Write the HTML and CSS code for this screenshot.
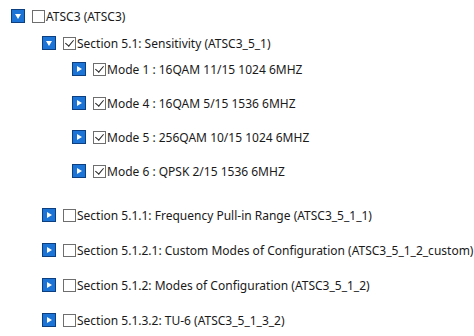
FILE: index.html
```html
<!DOCTYPE html>
<html lang="en">
<head>
    <meta charset="UTF-8">
    <title>Test tree</title>
    <link rel="stylesheet" href="styles.css">
</head>
<body>
    <ul class="tree">
        <li>
            <div class="row">
                <span class="toggle open"></span>
                <span class="check"></span>
                <span class="label">ATSC3 (ATSC3)</span>
            </div>
            <ul class="tree sections">
                <li>
                    <div class="row">
                        <span class="toggle open"></span>
                        <span class="check checked"></span>
                        <span class="label">Section 5.1: Sensitivity (ATSC3_5_1)</span>
                    </div>
                    <ul class="tree modes">
                        <li class="row">
                            <span class="toggle"></span>
                            <span class="check checked"></span>
                            <span class="label">Mode 1 : 16QAM 11/15 1024 6MHZ</span>
                        </li>
                        <li class="row">
                            <span class="toggle"></span>
                            <span class="check checked"></span>
                            <span class="label">Mode 4 : 16QAM 5/15 1536 6MHZ</span>
                        </li>
                        <li class="row">
                            <span class="toggle"></span>
                            <span class="check checked"></span>
                            <span class="label">Mode 5 : 256QAM 10/15 1024 6MHZ</span>
                        </li>
                        <li class="row">
                            <span class="toggle"></span>
                            <span class="check checked"></span>
                            <span class="label">Mode 6 : QPSK 2/15 1536 6MHZ</span>
                        </li>
                    </ul>
                </li>
                <li class="row">
                    <span class="toggle"></span>
                    <span class="check"></span>
                    <span class="label">Section 5.1.1: Frequency Pull-in Range (ATSC3_5_1_1)</span>
                </li>
                <li class="row">
                    <span class="toggle"></span>
                    <span class="check"></span>
                    <span class="label">Section 5.1.2.1: Custom Modes of Configuration (ATSC3_5_1_2_custom)</span>
                </li>
                <li class="row">
                    <span class="toggle"></span>
                    <span class="check"></span>
                    <span class="label">Section 5.1.2: Modes of Configuration (ATSC3_5_1_2)</span>
                </li>
                <li class="row">
                    <span class="toggle"></span>
                    <span class="check"></span>
                    <span class="label">Section 5.1.3.2: TU-6 (ATSC3_5_1_3_2)</span>
                </li>
            </ul>
        </li>
    </ul>
</body>
</html>
```

FILE: styles.css
```css
body {
    margin: 0;
    padding: 3px 0 0 11px;
    background-color: #fff;
    font-family: "Noto Sans", "Open Sans", sans-serif;
    font-size: 12px;
    color: #1a1a1a;
    overflow: hidden;
}

.tree {
    list-style: none;
    margin: 0;
    padding: 0;
}

.sections {
    padding: 1px 0 0 31px;
    display: flex;
    flex-direction: column;
    gap: 9px;
}

.modes {
    padding: 0 0 9px 30px;
    display: flex;
    flex-direction: column;
    gap: 8px;
}

.row {
    display: flex;
    align-items: center;
    height: 26px;
    white-space: nowrap;
}

.toggle {
    position: relative;
    width: 12px;
    height: 12px;
    background-color: #1b74d6;
    border: 1px solid #0c3f80;
    margin-right: 7px;
    flex-shrink: 0;
}

.toggle::after {
    content: "";
    position: absolute;
    left: 4px;
    top: 3px;
    border-left: 5px solid #fff;
    border-top: 3px solid transparent;
    border-bottom: 3px solid transparent;
}

.toggle.open::after {
    left: 3px;
    top: 4px;
    border-top: 5px solid #fff;
    border-left: 3px solid transparent;
    border-right: 3px solid transparent;
    border-bottom: 0;
}

.check {
    position: relative;
    width: 11px;
    height: 11px;
    border: 1px solid #6e6e6e;
    background-color: #fff;
    margin-right: 1px;
    flex-shrink: 0;
}

.check.checked::after {
    content: "";
    position: absolute;
    left: 3px;
    top: 0;
    width: 4px;
    height: 7px;
    border-right: 1.3px solid #222;
    border-bottom: 1.3px solid #222;
    transform: rotate(40deg);
}
```
